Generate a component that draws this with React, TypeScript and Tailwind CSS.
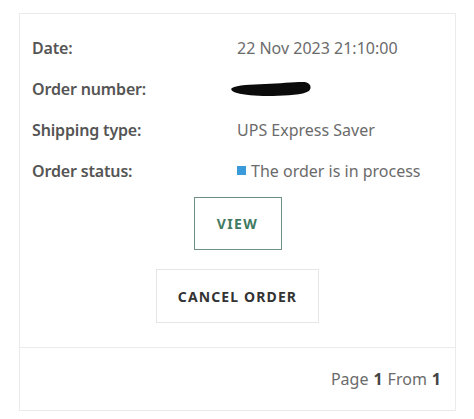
import React from 'react';

const rows: { label: string; value: React.ReactNode }[] = [
  { label: 'Date:', value: '22 Nov 2023 21:10:00' },
  {
    label: 'Order number:',
    value: (
      <svg width="82" height="18" viewBox="0 0 82 18" className="-ml-[6px]">
        <path
          d="M1 8 C6 5 20 4.5 34 4 C48 3.5 62 2 72 2 C80 2 81 8 78 11 C72 15 56 15.5 42 16 C28 16.5 14 15 6 13 C1 12 -1 9.5 1 8 Z"
          fill="#0b0b0b"
        />
      </svg>
    ),
  },
  { label: 'Shipping type:', value: 'UPS Express Saver' },
  {
    label: 'Order status:',
    value: (
      <span className="flex items-center gap-[5px]">
        <span className="inline-block h-[9px] w-[9px] bg-[#3b9ad9]" />
        The order is in process
      </span>
    ),
  },
];

export default function App() {
  return (
    <div className="min-h-[419px] bg-white pt-[13px] font-['Noto_Sans',sans-serif]">
      <div className="ml-[19px] w-[437px] border border-[#ebebeb] bg-white">
        <div className="px-[12px] pt-[13px] pb-[24px]">
          {rows.map((r) => (
            <div key={r.label} className="flex h-[41px] items-center text-[16px]">
              <div className="w-[205px] font-semibold tracking-[-0.01em] text-[#555]">{r.label}</div>
              <div className="text-[#6b6b6b]">{r.value}</div>
            </div>
          ))}
          <div className="mt-[6px] flex flex-col items-center gap-[19px]">
            <button
              type="button"
              className="h-[53px] w-[88px] border-[1.5px] border-[#6f8e84] text-[14px] font-bold tracking-[0.1em] text-[#3f7a61]"
            >
              VIEW
            </button>
            <button
              type="button"
              className="h-[54px] w-[163px] border border-[#e6e6e6] text-[14px] font-bold tracking-[0.08em] text-[#333]"
            >
              CANCEL ORDER
            </button>
          </div>
        </div>
        <div className="flex h-[63px] items-center justify-end border-t border-[#ebebeb] pr-[14px] text-[16px] text-[#6b6b6b]">
          Page <b className="mx-[5px] text-[#444]">1</b> From <b className="ml-[5px] text-[#444]">1</b>
        </div>
      </div>
    </div>
  );
}
